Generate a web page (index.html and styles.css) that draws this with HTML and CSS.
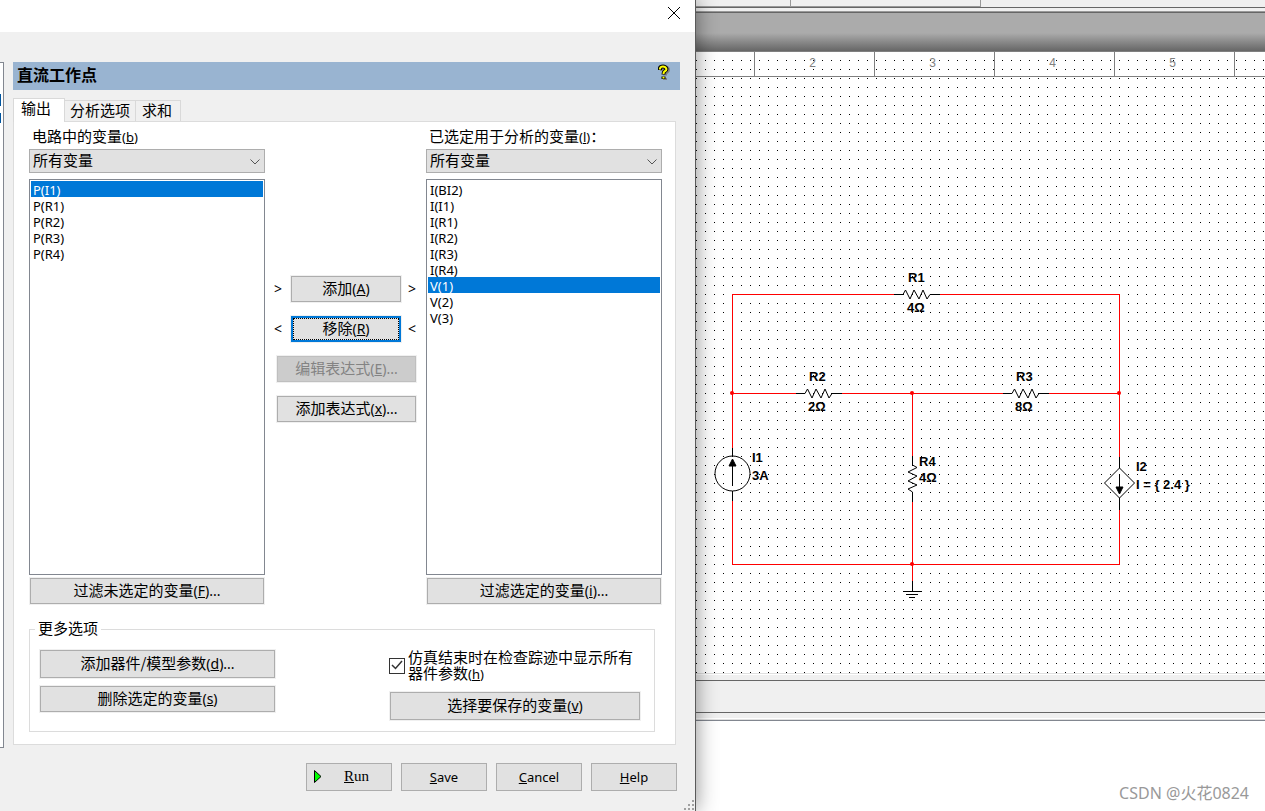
FILE: index.html
```
<!DOCTYPE html>
<html lang="zh-CN">
<head>
  <meta charset="UTF-8" />
  <meta name="viewport" content="width=device-width, initial-scale=1.0"/>
  <title>直流工作点</title>
  <link rel="stylesheet" href="styles.css">
</head>
<body>

<div class="dialog" role="dialog" aria-labelledby="title">
  <div class="titlebar">
    <button class="close" aria-label="Close">
      <svg width="14" height="14" viewBox="0 0 14 14"><path d="M1 1L13 13M13 1L1 13" stroke="#000" fill="none"/></svg>
    </button>
  </div>

  <div class="dialog-body">
    <div class="tree"></div>

    <div class="main">
      <div class="heading">
        <h1 id="title">直流工作点</h1>
        <button class="help" aria-label="Help topic">
          <svg width="14" height="17" viewBox="0 0 14 17" fill="none" stroke-linejoin="round">
            <path d="M4 6V4Q4 2.500 7 2.500T10 5Q10 6.500 8 7.500Q7 8 7 10.500M7 13V15" stroke="#808080" stroke-width="4" transform="translate(1 1)"/>
            <path d="M3 6V4Q3.500 2.500 6 2.500T9.500 5Q9.500 6.500 7.500 7.500Q6.500 8 6.500 10.500M6.500 12.500V15" stroke="#000" stroke-width="4"/>
            <path d="M3 5.500V4.500Q3.500 2.500 6 2.500T9.500 5Q9.500 6.500 7.500 7.500Q6.500 8 6.500 10M6.500 12.700V14.500" stroke="#ff0" stroke-width="2"/>
          </svg>
        </button>
      </div>

      <div class="tabs" role="tablist">
        <button class="tab active" role="tab" aria-selected="true">输出</button>
        <button class="tab" role="tab">分析选项</button>
        <button class="tab" role="tab">求和</button>
      </div>

      <div class="panel" role="tabpanel">
        <div class="columns">
          <div class="column">
            <label for="circuitVars">电路中的变量<span class="key">(<u>b</u>)</span></label>
            <div class="combo">
              <select id="circuitVars"><option>所有变量</option></select>
              <svg width="10" height="6" viewBox="0 0 10 6"><path d="M.5 .5L5 5L9.500 .5" stroke="#555" fill="none"/></svg>
            </div>
            <select class="list" size="10" aria-label="电路中的变量">
              <option selected>P(I1)</option>
              <option>P(R1)</option>
              <option>P(R2)</option>
              <option>P(R3)</option>
              <option>P(R4)</option>
            </select>
            <button class="btn">过滤未选定的变量<span class="key">(<u>F</u>)...</span></button>
          </div>

          <div class="transfer">
            <div class="move"><span>&gt;</span><button class="btn">添加<span class="key">(<u>A</u>)</span></button><span>&gt;</span></div>
            <div class="move"><span>&lt;</span><button class="btn focused">移除<span class="key">(<u>R</u>)</span></button><span>&lt;</span></div>
            <button class="btn" disabled>编辑表达式<span class="key">(<u>E</u>)...</span></button>
            <button class="btn">添加表达式<span class="key">(<u>x</u>)...</span></button>
          </div>

          <div class="column">
            <label for="selectedVars">已选定用于分析的变量<span class="key">(<u>l</u>)</span>：</label>
            <div class="combo">
              <select id="selectedVars"><option>所有变量</option></select>
              <svg width="10" height="6" viewBox="0 0 10 6"><path d="M.5 .5L5 5L9.500 .5" stroke="#555" fill="none"/></svg>
            </div>
            <select class="list" size="10" aria-label="已选定用于分析的变量">
              <option>I(BI2)</option>
              <option>I(I1)</option>
              <option>I(R1)</option>
              <option>I(R2)</option>
              <option>I(R3)</option>
              <option>I(R4)</option>
              <option selected>V(1)</option>
              <option>V(2)</option>
              <option>V(3)</option>
            </select>
            <button class="btn">过滤选定的变量<span class="key">(<u>i</u>)...</span></button>
          </div>
        </div>

        <fieldset class="more">
          <legend>更多选项</legend>
          <div class="more-left">
            <button class="btn tall">添加器件/模型参数<span class="key">(<u>d</u>)...</span></button>
            <button class="btn">删除选定的变量<span class="key">(<u>s</u>)</span></button>
          </div>
          <div class="more-right">
            <div class="check">
              <input type="checkbox" id="showAll" checked>
              <svg width="12" height="10" viewBox="0 0 12 10"><path d="M1 5L4.500 8.500L11 1" stroke="#333" stroke-width="1.500" fill="none"/></svg>
              <label for="showAll">仿真结束时在检查踪迹中显示所有器件参数<span class="key">(<u>h</u>)</span></label>
            </div>
            <button class="btn tall">选择要保存的变量<span class="key">(<u>v</u>)</span></button>
          </div>
        </fieldset>
      </div>

      <div class="footer">
        <button class="btn tall run">
          <svg width="8" height="13" viewBox="0 0 8 13"><path d="M.5 .5V12.500L7 6.500Z" fill="#0f0" stroke="#000"/></svg>
          <span><u>R</u>un</span>
        </button>
        <button class="btn tall"><span class="key"><u>S</u>ave</span></button>
        <button class="btn tall"><span class="key"><u>C</u>ancel</span></button>
        <button class="btn tall"><span class="key"><u>H</u>elp</span></button>
      </div>
    </div>
  </div>

  <svg class="grip" width="11" height="11" viewBox="0 0 11 11" fill="#a0a0a0">
    <path d="M8 0h2v2h-2zM4 4h2v2h-2zM8 4h2v2h-2zM0 8h2v2h-2zM4 8h2v2h-2zM8 8h2v2h-2z"/>
  </svg>
</div>

<div class="workspace">
  <div class="toolbar"><div class="tool-a"></div><div class="tool-b"></div></div>
  <div class="backdrop"></div>
  <div class="sheet">
    <div class="ruler">
      <span></span><span>2</span><span>3</span><span>4</span><span>5</span><span></span>
    </div>
    <svg class="schematic" width="520" height="540" viewBox="0 0 520 540">
      <defs>
        <path id="resistor" d="M0 0H9L11.500 -4.500L16 4.500L20 -4.500L25 4.500L29 -4.500L33 4.500L36 0H46"/>
      </defs>

      <g class="wire">
        <path d="M36.500 371V217.500H198M244 217.500H423.500V380"/>
        <path d="M36.500 316.500H100M145 316.500H307M352 316.500H423.500"/>
        <path d="M216.500 316.500V380M216.500 424V504"/>
        <path d="M36.500 424V487.500H423.500V433"/>
      </g>
      <g class="node">
        <circle cx="36" cy="316" r="2"/>
        <circle cx="216" cy="316" r="2"/>
        <circle cx="423" cy="316" r="2"/>
        <circle cx="216" cy="487" r="2"/>
      </g>

      <g class="part">
        <use href="#resistor" x="198" y="217.500"/>
        <use href="#resistor" x="100" y="316.500"/>
        <use href="#resistor" x="307" y="316.500"/>
        <use href="#resistor" transform="translate(216.500 379) rotate(90)"/>

        <!-- current source -->
        <path d="M36.500 371V379M36.500 414V424M36.500 387V409"/>
        <circle cx="36.500" cy="396.500" r="17.500"/>
        <path class="solid" d="M36.500 382L40 389H33Z"/>

        <!-- dependent source -->
        <path d="M423.500 380V391M423.500 421V433M423.500 397V411"/>
        <path d="M423.500 391L438.500 406L423.500 421L408.500 406Z"/>
        <path class="solid" d="M423.500 417L420 410H427Z"/>

        <!-- ground -->
        <path d="M216.500 504V514M207 514.500H226M210 517.500H222M213 520.500H219"/>
      </g>

      <g class="names">
        <text x="212" y="205">R1</text><text x="211" y="235">4Ω</text>
        <text x="113" y="304">R2</text><text x="112" y="334">2Ω</text>
        <text x="320" y="304">R3</text><text x="319" y="334">8Ω</text>
        <text x="223" y="389">R4</text><text x="223" y="405">4Ω</text>
        <text x="56" y="385">I1</text><text x="56" y="403">3A</text>
        <text x="440" y="394">I2</text><text x="440" y="412">I = { 2.4 }</text>
      </g>
    </svg>
  </div>
  <div class="splitter"></div>
  <div class="output"><span>CSDN @火花0824</span></div>
</div>

</body>
</html>
```

FILE: styles.css
```
*{box-sizing:border-box;}
body{
  margin:0;display:flex;min-height:100vh;overflow:hidden;
  font:15px/20px "Noto Sans CJK SC", sans-serif;color:#000;background:#fff;
}
button,select{font:inherit;color:inherit;margin:0;padding:0;border-radius:0;}
button{border:none;background:none;}
.key{font:13px/16px "Noto Sans", sans-serif;}

/* dialog */
.dialog{
  position:relative;z-index:1;flex:none;width:696px;
  display:flex;flex-direction:column;
  background:#f0f0f0;border-right:1px solid #5a5a5a;
  box-shadow:0 0 20px rgba(0,0,0,.45);
}
.titlebar{
  height:32px;background:#fff;padding:6px 14px;
  display:flex;justify-content:flex-end;align-items:flex-start;
}
.close,.help{display:flex;}
.dialog-body{flex:1;display:flex;gap:9px;padding-top:30px;}
.tree{
  width:4px;margin-bottom:63px;
  border:1px solid #828790;border-left:none;
  background:
    linear-gradient(#00549e,#00549e) 0 31px/1px 12px no-repeat,
    linear-gradient(#00549e,#00549e) 0 50px/1px 10px no-repeat,
    #fff;
}
.main{width:667px;display:flex;flex-direction:column;}
.heading{
  height:28px;padding:2px 9px 0 4px;background:#99b4d1;
  display:flex;justify-content:space-between;align-items:flex-start;
}
.heading h1{margin:0;font-size:16px;line-height:20px;}

.tabs{display:flex;align-items:flex-end;margin-top:8px;}
.tab{
  height:21px;padding:0 5px 2px;line-height:18px;
  border:1px solid #d9d9d9;border-bottom:none;border-left:none;
}
.tab:last-child{padding:0 8px 2px 6px;}
.tab.active{
  position:relative;z-index:1;height:24px;margin-bottom:-1px;
  padding:0 13px 6px 7px;border-left:1px solid #d9d9d9;background:#fff;
}
.panel{
  flex:1;display:flex;flex-direction:column;
  width:663px;padding:4px 13px 12px 15px;
  background:#fff;border:1px solid #dcdcdc;
}
.columns{flex:1;display:grid;grid-template-columns:236px 1fr 236px;}
.column{display:flex;flex-direction:column;}
.column > label{padding-left:3px;line-height:20px;height:23px;white-space:nowrap;}
.combo{position:relative;}
.combo select{
  display:block;width:100%;height:24px;padding:0 3px 2px;
  appearance:none;border:1px solid #adadad;background:#e1e1e1;
  line-height:20px;
}
.combo svg{position:absolute;right:5px;top:10px;pointer-events:none;}
.list{
  flex:1;margin-top:6px;padding:1px;border:1px solid #828790;
  background:#fff;outline:none;overflow:hidden;
  font:13px/16px "Noto Sans", sans-serif;
}
.list option{height:16px;min-height:16px;padding:0 2px;line-height:14px;}
.list option:checked{background:linear-gradient(#0078d7,#0078d7);color:#fff;}

.btn{
  height:26px;line-height:20px;padding-bottom:2px;
  border:1px solid #adadad;background:#e1e1e1;
  box-shadow:0 0 0 1px #f0f0f0;white-space:nowrap;
}
.btn .key{font-size:14px;}
.btn.tall{height:28px;}
.btn:disabled{background:#ccc;border-color:#bfbfbf;color:#838383;}
.btn.focused{
  border:2px solid #0078d7;outline:1px dotted #000;outline-offset:-3px;
}
.column .btn{margin:3px 1px 0;}

.transfer{display:flex;flex-direction:column;gap:14px;padding:150px 10px 0 12px;}
.move{
  display:flex;justify-content:space-between;align-items:center;
  margin:0 0 0 -3px;
  font:14px/16px "Noto Sans", sans-serif;
}
.move .btn{width:110px;margin-left:2px;font:15px/20px "Noto Sans CJK SC", sans-serif;}

.more{
  display:flex;justify-content:space-between;
  width:626px;height:113px;margin:15px 0 0;padding:11px 14px 0 10px;
  border:1px solid #dcdcdc;
}
.more legend{margin-left:-5px;padding:0 3px 2px;line-height:18px;}
.more-left{display:flex;flex-direction:column;gap:8px;width:235px;}
.more-right{display:flex;flex-direction:column;gap:10px;width:250px;margin-top:-1px;}
.check{position:relative;display:flex;align-items:center;gap:3px;margin-left:-1px;line-height:16px;}
.check input{
  appearance:none;flex:none;width:16px;height:16px;margin:0;
  border:1px solid #333;background:#fff;
}
.check svg{position:absolute;left:2px;top:11px;pointer-events:none;}

.footer{display:flex;justify-content:flex-end;gap:9px;padding:18px 3px 20px;}
.footer .btn{width:86px;box-shadow:none;}
.footer .key{font-size:13px;}
.run{display:flex;align-items:center;gap:22px;padding-left:7px;}
.run span{font:15px/20px "Liberation Serif", serif;}
.grip{position:absolute;right:0;bottom:0;}

/* schematic window */
.workspace{flex:1;min-width:0;display:flex;flex-direction:column;}
.toolbar{display:flex;height:8px;background:#f0f0f0;border-bottom:1px solid #666;}
.tool-a,.tool-b{border-right:1px solid #999;border-bottom:1px solid #999;}
.tool-a{width:95px;}
.tool-b{width:190px;}
.backdrop{
  height:43px;
  background:linear-gradient(#f0f0f0 3px,#999 3px 4px,#666 4px 5px,#ababab 5px 25px,#666 43px);
}
/* white bands over vertical lines leave a 9px dot grid */
.sheet{
  flex:1;overflow:hidden;border-top:1px solid #808080;
  background:
    linear-gradient(#fff 8px,transparent 8px) 0 0/9px 9px,
    linear-gradient(to right,#000 1px,#fff 1px) 0 0/9px 9px;
}
.ruler{
  display:grid;grid-template-columns:59px repeat(5,120px);
  height:25px;border-bottom:1px solid #808080;
  font:12px/22px "Liberation Sans", sans-serif;color:#808080;text-align:center;
}
.ruler span{padding-right:4px;border-right:1px solid #808080;}
.schematic{display:block;}
.wire{fill:none;stroke:#f00;shape-rendering:crispEdges;}
.node{fill:#f00;}
.part{fill:none;stroke:#000;}
.part .solid{fill:#000;}
.names{font:bold 13px "Liberation Sans", sans-serif;}

.splitter{
  flex:none;height:47px;
  background:linear-gradient(#e0e0e0 1px,#fff 1px 2px,#f0f0f0 2px 7px,#666 7px 8px,
    #f0f0f0 8px 39px,#666 39px 40px,#f0f0f0 40px 45px,#fff 45px 46px,#e0e0e0 46px);
}
.output{
  flex:none;height:91px;padding:0 16px 6px;border-top:1px solid #828790;
  display:flex;justify-content:flex-end;align-items:flex-end;
  font:16px/24px "Noto Sans", "Noto Sans CJK SC", sans-serif;color:#999;
}
```
